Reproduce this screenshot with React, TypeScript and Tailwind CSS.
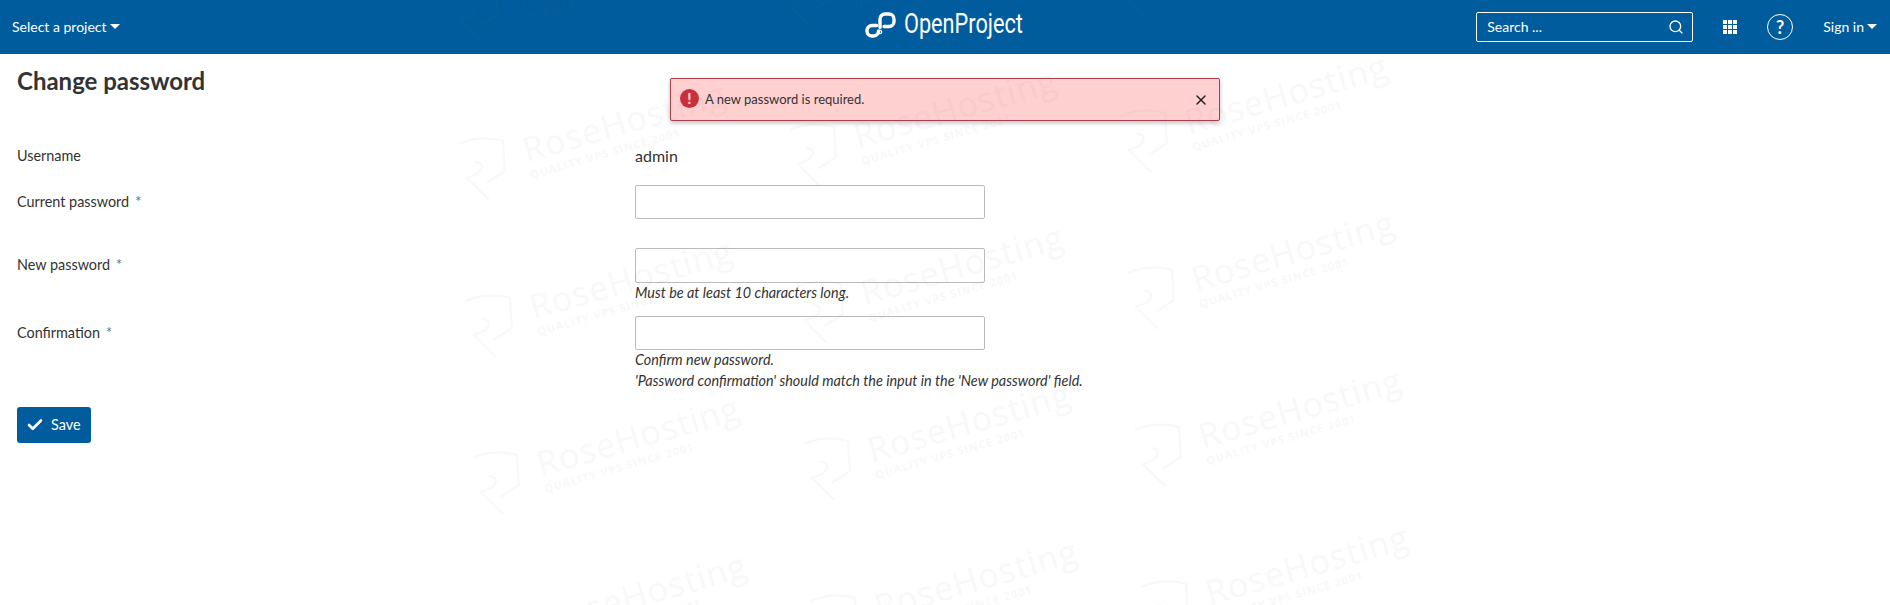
import React from "react";
import { Check, Search, X } from "lucide-react";

const lato = "font-['Lato',sans-serif]";

// text centre of each faint RoseHosting mark, row/column walk of the repeated background
const marks: { x: number; y: number }[] = [];
for (let row = 0; row < 5; row++) {
  for (let col = 1; col < 4; col++) {
    marks.push({
      x: 643 + (col - 1) * 331 + (row - 3) * 7,
      y: 441 + (col - 1) * -14 + (row - 3) * 157,
    });
  }
}

const Caret = () => (
  <span className="ml-[3px] inline-block h-0 w-0 border-x-[5px] border-t-[5px] border-x-transparent border-t-white" />
);

const Logo = () => (
  <svg width="31" height="26" viewBox="0 0 31 26" fill="none" stroke="white" strokeWidth="3.4" strokeLinecap="round">
    <path d="M15 15.5V7a5 5 0 0 1 5-5h4a5 5 0 0 1 5 5v2.5a5 5 0 0 1-5 5h-5" />
    <path d="M11.5 13.5H7a5 5 0 0 0-5 5V19a5 5 0 0 0 5 5h1.5a5 5 0 0 0 5-5" />
    <circle cx="15" cy="20" r="0.6" />
  </svg>
);

const Watermark = ({ x, y }: { x: number; y: number }) => (
  <div
    className="absolute w-[360px] -rotate-[16deg] text-[#808080] opacity-[0.05]"
    style={{ left: x - 180, top: y - 35 }}
  >
    <div className="flex items-center gap-[16px]">
      <svg width="56" height="70" viewBox="0 0 56 70" fill="none" stroke="currentColor" strokeWidth="2" className="rotate-[16deg]">
        <path d="M4 10c14-6 28-7 44-3l2 30-18 12M20 28c8 0 10 6 2 12l-10 4 22 22" />
      </svg>
      <div className="font-['Open_Sans',sans-serif]">
        <div className="text-[34px] leading-[38px] font-normal tracking-[1px]">RoseHosting</div>
        <div className="text-[11px] leading-[14px] font-bold tracking-[1px]">QUALITY VPS SINCE 2001</div>
      </div>
    </div>
  </div>
);

const Label = ({ children, required }: { children: React.ReactNode; required?: boolean }) => (
  <label className="block pt-[7px] text-[14.4px] leading-[20px] text-[#333]">
    {children}
    {required && <span className="ml-[6px] text-[#3f7f9f]">*</span>}
  </label>
);

const TextInput = ({ className }: { className: string }) => (
  <input type="password" className={`block w-[350px] rounded-[2px] border border-[#bbb] bg-white ${className}`} />
);

const Help = ({ children, first }: { children: React.ReactNode; first?: boolean }) => (
  <p className={`text-[14.4px] leading-[21px] text-[#333] italic ${first ? "-mt-px" : ""}`}>{children}</p>
);

export default function App() {
  return (
    <div className={`relative h-[605px] overflow-hidden bg-white ${lato}`}>
      <header className="relative flex h-[54px] items-center bg-[#005c9c] text-[14px] text-white">
        <button className="flex items-center pb-[1px] pl-[12px]">
          Select a project
          <Caret />
        </button>

        <div className="absolute left-[865px] top-[12px] flex items-start">
          <Logo />
          <span className="-mt-[3px] ml-[8px] inline-block w-[116px] origin-left scale-x-[0.775] font-['Roboto',sans-serif] text-[28px] leading-[30px] font-normal">
            OpenProject
          </span>
        </div>

        <div className="ml-auto flex items-center">
          <div className="flex h-[30px] w-[217px] items-center justify-between rounded-[2px] border border-white pr-[8px] pb-[1px] pl-[10px]">
            <span>Search ...</span>
            <Search size={16} strokeWidth={2} />
          </div>
          <div className="ml-[30px] grid w-[14px] grid-cols-3 gap-[1px]">
            {Array.from({ length: 9 }).map((_, i) => (
              <span key={i} className="h-[4px] bg-white" />
            ))}
          </div>
          <div className="ml-[30px] flex h-[26px] w-[26px] items-center justify-center rounded-full border-[1.5px] border-white text-[18px] font-bold">
            ?
          </div>
          <button className="mr-[13px] ml-[30px] flex items-center pb-[1px]">
            Sign in
            <Caret />
          </button>
        </div>
      </header>

      <main className="px-[17px] pt-[9px]">
        <h1 className="text-[24px] leading-[36px] font-bold text-[#333]">Change password</h1>

        <div className="mt-[45px] grid grid-cols-[618px_1fr]">
          <label className="text-[14.4px] leading-[24px] text-[#333]">Username</label>
          <div className="text-[16px] leading-[24px] text-[#333]">admin</div>
        </div>

        <div className="mt-[17px] grid grid-cols-[618px_1fr]">
          <Label required>Current password</Label>
          <TextInput className="h-[34px]" />
        </div>

        <div className="mt-[29px] grid grid-cols-[618px_1fr]">
          <Label required>New password</Label>
          <div>
            <TextInput className="h-[35px]" />
            <Help first>Must be at least 10 characters long.</Help>
          </div>
        </div>

        <div className="mt-[13px] grid grid-cols-[618px_1fr]">
          <Label required>Confirmation</Label>
          <div>
            <TextInput className="h-[34px]" />
            <Help first>Confirm new password.</Help>
            <Help>'Password confirmation' should match the input in the 'New password' field.</Help>
          </div>
        </div>

        <button className="mt-[16px] flex h-[36px] w-[74px] items-center rounded-[3px] bg-[#005c9c] pb-[1px] pl-[9px] text-[14.4px] text-white">
          <Check size={18} strokeWidth={3.5} />
          <span className="ml-[7px]">Save</span>
        </button>
      </main>

      <div className="absolute top-[78px] left-1/2 flex h-[43px] w-[550px] -translate-x-1/2 items-center rounded-[2px] border border-[#a8404c] bg-[#ffd0d0] pr-[10px] pl-[9px] text-[13px] text-[#333] shadow-[0_2px_4px_rgba(0,0,0,0.25)]">
        <span className="-mt-[3px] flex h-[19px] w-[19px] items-center justify-center rounded-full bg-[#c9303e] text-[15px] leading-none font-black text-[#ffd0d0]">
          !
        </span>
        <span className="ml-[6px]">A new password is required.</span>
        <X size={16} strokeWidth={2.2} className="ml-auto text-[#222]" />
      </div>

      <div className="pointer-events-none absolute inset-0">
        {marks.map((m) => (
          <Watermark key={`${m.x}-${m.y}`} x={m.x} y={m.y} />
        ))}
      </div>
    </div>
  );
}
